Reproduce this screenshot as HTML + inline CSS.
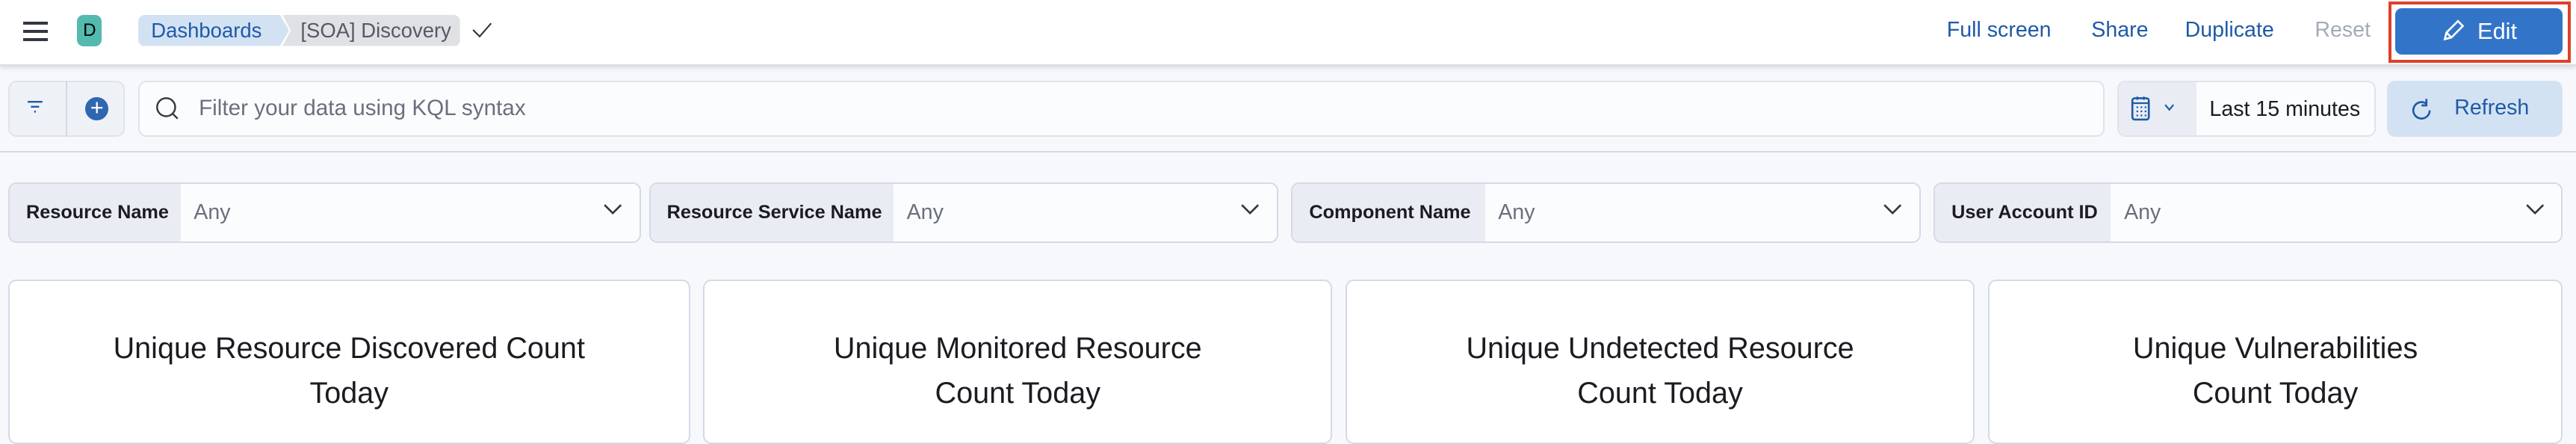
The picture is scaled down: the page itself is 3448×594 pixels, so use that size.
<!DOCTYPE html>
<html><head><meta charset="utf-8"><style>
html{zoom:2.19898}
body{margin:0;width:1568px;height:260px;overflow:hidden;background:#f7f8fc;font-family:"Liberation Sans",sans-serif;position:relative}
.a{position:absolute}
.hdr{left:0;top:0;width:1568px;height:39px;background:#fff;box-shadow:0 1px 3px rgba(0,0,0,.15);border-bottom:1px solid #d9dde5}
.lnk{top:11px;font-size:13px;color:#1f5aa6}
.box{background:#fbfcfd;border:1px solid #dfe3ea;border-radius:5px;box-sizing:border-box}
.ctl{top:111px;height:37px;border:1px solid #d3dae6;border-radius:5px;box-sizing:border-box;background:#fbfcfd;overflow:hidden}
.ctl .l{position:absolute;left:0;top:0;bottom:0;background:#e9edf3;font-size:11.5px;font-weight:bold;color:#1a1c21;line-height:35px;padding-left:10px;box-sizing:border-box}
.ctl .v{position:absolute;top:0;line-height:35px;font-size:13px;color:#69707d}
.ctl svg{position:absolute;right:10px;top:12px}
.pan{top:170px;height:100px;background:#fff;border:1px solid #d3dae6;border-radius:5px;box-sizing:border-box;text-align:center;font-size:18px;color:#1a1c21;line-height:27px;padding-top:28px}
</style></head><body>
<div class="a hdr"></div>
<div class="a" style="left:14px;top:13px;width:15px;height:2px;background:#343741;box-shadow:0 5px 0 #343741,0 10px 0 #343741"></div>
<div class="a" style="left:47px;top:9px;width:15px;height:19px;background:#54b9ae;border-radius:4px;font-size:11px;line-height:19px;text-align:center;color:#000">D</div>
<div class="a" style="left:172px;top:9px;width:108px;height:19px;background:#e0e1e4;border-radius:0 4px 4px 0;clip-path:polygon(0 0,100% 0,100% 100%,0 100%,5px 50%);font-size:12.5px;line-height:19px;color:#555a63;text-indent:11px">[SOA] Discovery</div>
<div class="a" style="left:84px;top:9px;width:92px;height:19px;background:#d3e2f3;border-radius:4px 0 0 4px;clip-path:polygon(0 0,94% 0,100% 50%,94% 100%,0 100%);font-size:12.5px;line-height:19px;color:#1f5aa6;text-indent:8px">Dashboards</div>
<svg class="a" style="left:287px;top:13px" width="13" height="11"><path d="M1 5l4 4 7-8" fill="none" stroke="#343741" stroke-width="1"/></svg>
<div class="a lnk" style="left:1185px">Full screen</div>
<div class="a lnk" style="left:1273px">Share</div>
<div class="a lnk" style="left:1330px">Duplicate</div>
<div class="a lnk" style="left:1409px;color:#a2abb8">Reset</div>
<div class="a" style="left:1454px;top:1px;width:111px;height:37px;border:2px solid #e0402a;box-sizing:border-box"></div>
<div class="a" style="left:1458px;top:5px;width:102px;height:28px;background:#3275c8;border-radius:4px;color:#fff;font-size:14px;line-height:28px"><svg style="position:absolute;left:28px;top:7px" width="14" height="14"><path d="M2 12l1-4 7-7 3 3-7 7zM3 8l3 3" fill="none" stroke="#fff" stroke-width="1.2"/></svg><span style="position:absolute;left:50px">Edit</span></div>

<div class="a box" style="left:5px;top:49px;width:71px;height:34px;background:#eef1f6"></div>
<div class="a" style="left:40px;top:49px;width:1px;height:34px;background:#d3dae6"></div>
<svg class="a" style="left:17px;top:61px" width="10" height="9"><path d="M0 1h9M2 4h5M4 7h1" stroke="#1f5aa6" stroke-width="1.1"/></svg>
<div class="a" style="left:52px;top:59px;width:14px;height:14px;border-radius:50%;background:#2e66b0;color:#fff;font-size:14px;line-height:13px;text-align:center">+</div>
<div class="a box" style="left:84px;top:49px;width:1197px;height:34px"></div>
<svg class="a" style="left:94px;top:58px" width="16" height="16"><circle cx="7" cy="7" r="5.5" fill="none" stroke="#343741" stroke-width="1.1"/><path d="M11 11l3 3" stroke="#343741" stroke-width="1.1"/></svg>
<div class="a" style="left:121px;top:58px;font-size:13.5px;color:#69707d">Filter your data using KQL syntax</div>
<div class="a box" style="left:1289px;top:49px;width:157px;height:34px;overflow:hidden"><div style="position:absolute;left:0;top:0;width:47px;height:34px;background:#e9edf3"></div>
<svg style="position:absolute;left:7px;top:8px" width="28" height="16"><rect x="1" y="2" width="10" height="13" rx="1.5" fill="none" stroke="#1f5aa6" stroke-width="1.2"/><path d="M1 5h10M4 1v2M8 1v2" stroke="#1f5aa6"/><path d="M3.5 7.5h1M6 7.5h1M8.5 7.5h1M3.5 10h1M6 10h1M8.5 10h1M3.5 12.5h1M6 12.5h1M8.5 12.5h1" stroke="#1f5aa6"/><path d="M21 6l2.5 3 2.5-3" fill="none" stroke="#1f5aa6"/></svg>
<div style="position:absolute;left:55px;top:9px;font-size:13px;color:#1a1c21">Last 15 minutes</div></div>
<div class="a" style="left:1453px;top:49px;width:107px;height:34px;background:#d3e2f3;border-radius:5px"><svg style="position:absolute;left:15px;top:10px" width="12" height="14"><path d="M9 4A5 5 0 1 0 11 8M9 1v4h-3" fill="none" stroke="#1f5aa6" stroke-width="1.2"/></svg><span style="position:absolute;left:41px;top:9px;font-size:13px;color:#1f5aa6">Refresh</span></div>
<div class="a" style="left:0;top:92px;width:1568px;height:1px;background:#d3dae6"></div>

<div class="a ctl" style="left:5px;width:385px"><div class="l" style="width:104px">Resource Name</div><div class="v" style="left:112px">Any</div><svg width="12" height="8"><path d="M1 1l5 5 5-5" fill="none" stroke="#343741" stroke-width="1.2"/></svg></div>
<div class="a ctl" style="left:395px;width:383px"><div class="l" style="width:148px">Resource Service Name</div><div class="v" style="left:156px">Any</div><svg width="12" height="8"><path d="M1 1l5 5 5-5" fill="none" stroke="#343741" stroke-width="1.2"/></svg></div>
<div class="a ctl" style="left:786px;width:383px"><div class="l" style="width:117px">Component Name</div><div class="v" style="left:125px">Any</div><svg width="12" height="8"><path d="M1 1l5 5 5-5" fill="none" stroke="#343741" stroke-width="1.2"/></svg></div>
<div class="a ctl" style="left:1177px;width:383px"><div class="l" style="width:107px">User Account ID</div><div class="v" style="left:115px">Any</div><svg width="12" height="8"><path d="M1 1l5 5 5-5" fill="none" stroke="#343741" stroke-width="1.2"/></svg></div>

<div class="a pan" style="left:5px;width:415px">Unique Resource Discovered Count<br>Today</div>
<div class="a pan" style="left:428px;width:383px">Unique Monitored Resource<br>Count Today</div>
<div class="a pan" style="left:819px;width:383px">Unique Undetected Resource<br>Count Today</div>
<div class="a pan" style="left:1210px;width:350px">Unique Vulnerabilities<br>Count Today</div>
</body></html>
